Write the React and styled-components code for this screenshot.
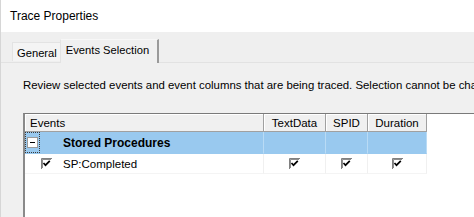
import React from "react";
import styled, { createGlobalStyle } from "styled-components";

const GlobalStyle = createGlobalStyle`
  html, body { margin: 0; padding: 0; background: #f0f0f0; }
  body { font-family: "Liberation Sans", Arial, sans-serif; color: #000; }
`;

const Window = styled.div`
  width: 474px;
  height: 217px;
  overflow: hidden;
  display: flex;
  flex-direction: column;
  background: #f0f0f0;
  border-left: 1px solid #d6d6d6;
  box-sizing: border-box;
`;

const TitleBar = styled.div`
  height: 32px;
  flex: none;
  background: #fff;
  padding: 9px 0 0 9px;
  box-sizing: border-box;
  font-size: 12px;
`;

const TabStrip = styled.div`
  height: 30px;
  flex: none;
  display: flex;
  align-items: flex-end;
  padding-left: 11px;
  background: #efefef;
`;

const Tab = styled.div`
  box-sizing: border-box;
  font-size: 11.2px;
  white-space: nowrap;
  height: ${(p) => (p.$active ? 24 : 19)}px;
  padding: ${(p) => (p.$active ? "4px 8px 0 5px" : "4px 3px 0 4px")};
  margin-bottom: ${(p) => (p.$active ? -1 : 1)}px;
  background: ${(p) => (p.$active ? "#f0f0f0" : "#f4f4f4")};
  border-left: 1px solid #e3e3e3;
  border-top: 1px solid ${(p) => (p.$active ? "#f7f7f7" : "#e3e3e3")};
  border-right: ${(p) => (p.$active ? "2px solid #9a9a9a" : "none")};
  z-index: ${(p) => (p.$active ? 1 : 0)};
`;

const TabPage = styled.div`
  flex: 1;
  border-top: 1px solid #e2e2e2;
  padding: 16px 0 0 22px;
  display: flex;
  flex-direction: column;
`;

const Hint = styled.div`
  font-size: 11.4px;
  white-space: nowrap;
  height: 34px;
`;

const GridFrame = styled.div`
  flex: 1;
  background: #fff;
  border-top: 1px solid #7a7a7a;
  border-left: 2px solid #8a8a8a;
  margin-right: -40px;
`;

const Row = styled.div`
  display: grid;
  grid-template-columns: 239px 62px 42px 59px;
  height: ${(p) => p.$h}px;
`;

const HeadCell = styled.div`
  background: #f0f0f0;
  border-right: 1px solid #a0a0a0;
  border-bottom: 1px solid #a0a0a0;
  box-shadow: inset 1px 1px 0 #fff;
  font-size: 11.5px;
  display: flex;
  align-items: center;
  justify-content: ${(p) => (p.$left ? "flex-start" : "center")};
  padding-left: ${(p) => (p.$left ? 5 : 0)}px;
`;

const Cell = styled.div`
  background: ${(p) => (p.$selected ? "#99c9ef" : "#fff")};
  border-right: 1px solid ${(p) => (p.$selected ? "#b9dbf5" : "#f0f0f0")};
  border-bottom: 1px solid ${(p) => (p.$selected ? "#99c9ef" : "#f4f4f4")};
  display: flex;
  align-items: center;
  justify-content: center;
  font-size: 11.5px;
`;

const EventCell = styled(Cell)`
  justify-content: flex-start;
  font-weight: ${(p) => (p.$bold ? 700 : 400)};
  font-size: ${(p) => (p.$bold ? 12 : 11.5)}px;
`;

const Expander = styled.div`
  width: 15px;
  height: 100%;
  box-sizing: border-box;
  border: 1px dotted #3a3a3a;
  display: flex;
  align-items: center;
  justify-content: center;
  margin-right: 23px;
`;

const Minus = styled.div`
  width: 9px;
  height: 9px;
  background: #fff;
  border: 1px solid #9a9a9a;
  display: flex;
  align-items: center;
  justify-content: center;
  &::after {
    content: "";
    width: 5px;
    height: 1px;
    background: #000;
  }
`;

const Indent = styled.div`
  width: 16px;
  display: flex;
  justify-content: flex-start;
  margin-right: 6px;
  margin-left: 16px;
`;

const Check = () => (
  <svg width="11" height="11" viewBox="0 0 11 11">
    <rect x="0" y="0" width="11" height="11" fill="#fff" />
    <path d="M0.5 11V0.5H11" stroke="#808080" fill="none" />
    <path d="M1.5 10V1.5H10" stroke="#404040" fill="none" strokeWidth="0.6" />
    <path d="M2.5 5 L4.5 7.2 L8.8 2.8" stroke="#000" strokeWidth="1.7" fill="none" />
  </svg>
);

export default function App() {
  return (
    <>
      <GlobalStyle />
      <Window>
        <TitleBar>Trace Properties</TitleBar>
        <TabStrip>
          <Tab>General</Tab>
          <Tab $active>Events Selection</Tab>
        </TabStrip>
        <TabPage>
          <Hint>
            Review selected events and event columns that are being traced. Selection cannot be changed.
          </Hint>
          <GridFrame>
            <Row $h={18}>
              <HeadCell $left>Events</HeadCell>
              <HeadCell>TextData</HeadCell>
              <HeadCell>SPID</HeadCell>
              <HeadCell>Duration</HeadCell>
            </Row>
            <Row $h={22}>
              <EventCell $selected $bold>
                <Expander>
                  <Minus />
                </Expander>
                Stored Procedures
              </EventCell>
              <Cell $selected />
              <Cell $selected />
              <Cell $selected />
            </Row>
            <Row $h={20}>
              <EventCell>
                <Indent>
                  <Check />
                </Indent>
                SP:Completed
              </EventCell>
              <Cell><Check /></Cell>
              <Cell><Check /></Cell>
              <Cell><Check /></Cell>
            </Row>
          </GridFrame>
        </TabPage>
      </Window>
    </>
  );
}
